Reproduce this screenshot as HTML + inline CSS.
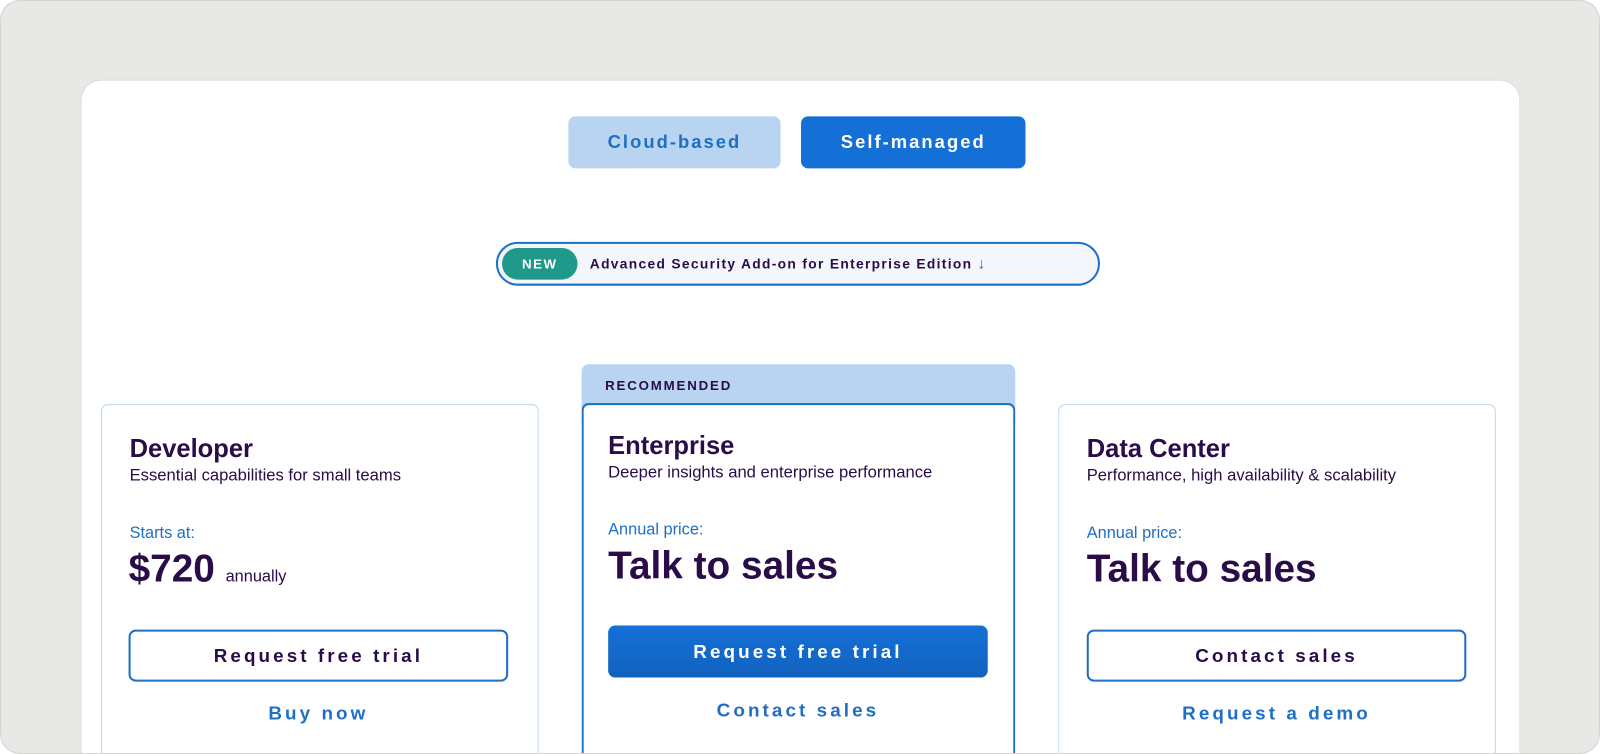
<!DOCTYPE html>
<html><head><meta charset="utf-8"><style>
*{margin:0;padding:0;box-sizing:border-box}
html,body{width:1600px;height:754px;overflow:hidden}
body{background:#fff;font-family:"Liberation Sans",sans-serif;position:relative}
.outer{position:absolute;left:0;top:0;width:1600px;height:754px;background:#e8e8e6;border:1px solid #d4d4d2;border-radius:20px;overflow:hidden}
.w{position:absolute;left:-1px;top:-1px;width:1568px;height:739px;transform:scale(1.0204);transform-origin:0 0}
.panel{position:absolute;left:79px;top:78px;width:1411px;height:661px;background:#fff;border:1px solid #dcdcda;border-bottom:none;border-radius:20px 20px 0 0}
.a{position:absolute}
.tog{position:absolute;top:114px;height:51px;border-radius:7px;font-weight:bold;font-size:18px;letter-spacing:2px;display:flex;align-items:center;justify-content:center}
.card{position:absolute;top:396px;height:343px;width:429px;border:1.5px solid #b8d4f0;border-bottom:none;border-radius:7px 7px 0 0;background:#fff}
.t{position:absolute;color:#2a0c48;font-weight:bold;font-size:25px;white-space:nowrap}
.s{position:absolute;color:#2a0c48;font-size:16.3px;white-space:nowrap}
.l{position:absolute;color:#1f6fc4;font-size:16px;white-space:nowrap}
.p{position:absolute;color:#2a0c48;font-weight:bold;font-size:38px;white-space:nowrap}
.b{position:absolute;height:51px;width:372px;border:2px solid #1f6fc4;border-radius:7px;display:flex;align-items:center;justify-content:center;font-weight:bold;font-size:18.5px;letter-spacing:3px;color:#2a0c48}
.k{position:absolute;width:372px;text-align:center;font-weight:bold;font-size:18.5px;letter-spacing:3px;color:#1f6fc4}
</style></head><body>
<div class="outer">
<div class="w">
<div class="panel"></div>
<div class="tog" style="left:557px;width:208px;background:#b8d4f0;color:#1f6fc4">Cloud-based</div>
<div class="tog" style="left:785px;width:220px;background:#1470d6;color:#fff">Self-managed</div>

<div class="a" style="left:486px;top:237px;width:592px;height:43px;border:2px solid #1f6fc4;border-radius:22px;background:#f3f6fb"></div>
<div class="a" style="left:492px;top:243px;width:74px;height:31px;border-radius:16px;background:#1f9a8a;color:#fff;font-weight:bold;font-size:13px;letter-spacing:1.5px;display:flex;align-items:center;justify-content:center">NEW</div>
<div class="a" style="left:578px;top:250px;font-size:13.5px;font-weight:bold;letter-spacing:1.3px;color:#2a0c48;white-space:nowrap">Advanced Security Add-on for Enterprise Edition <span style="color:#1f6fc4;font-size:15px">↓</span></div>

<div class="card" style="left:99px"></div>
<div class="t" style="left:127px;top:426px">Developer</div>
<div class="s" style="left:127px;top:457px">Essential capabilities for small teams</div>
<div class="l" style="left:127px;top:514px">Starts at:</div>
<div class="p" style="left:126px;top:537px">$720 <span style="font-size:16px;font-weight:normal">annually</span></div>
<div class="b" style="left:126px;top:617px">Request free trial</div>
<div class="k" style="left:126px;top:688px">Buy now</div>

<div class="a" style="left:570px;top:357px;width:425px;height:60px;background:#b8d4f0;border-radius:7px 7px 0 0"></div>
<div class="a" style="left:593px;top:370px;font-size:13px;font-weight:bold;letter-spacing:1.8px;color:#2a0c48">RECOMMENDED</div>
<div class="card" style="left:570px;top:395px;height:344px;width:425px;border:2px solid #1f6fc4;border-bottom:none"></div>
<div class="t" style="left:596px;top:423px">Enterprise</div>
<div class="s" style="left:596px;top:454px">Deeper insights and enterprise performance</div>
<div class="l" style="left:596px;top:511px">Annual price:</div>
<div class="p" style="left:596px;top:534px">Talk to sales</div>
<div class="b" style="left:596px;top:613px;background:linear-gradient(#1470d6,#1262bf);border:none;color:#fff">Request free trial</div>
<div class="k" style="left:596px;top:685px">Contact sales</div>

<div class="card" style="left:1037px"></div>
<div class="t" style="left:1065px;top:426px">Data Center</div>
<div class="s" style="left:1065px;top:457px">Performance, high availability &amp; scalability</div>
<div class="l" style="left:1065px;top:514px">Annual price:</div>
<div class="p" style="left:1065px;top:537px">Talk to sales</div>
<div class="b" style="left:1065px;top:617px">Contact sales</div>
<div class="k" style="left:1065px;top:688px">Request a demo</div>
</div>
</div>
</body></html>
